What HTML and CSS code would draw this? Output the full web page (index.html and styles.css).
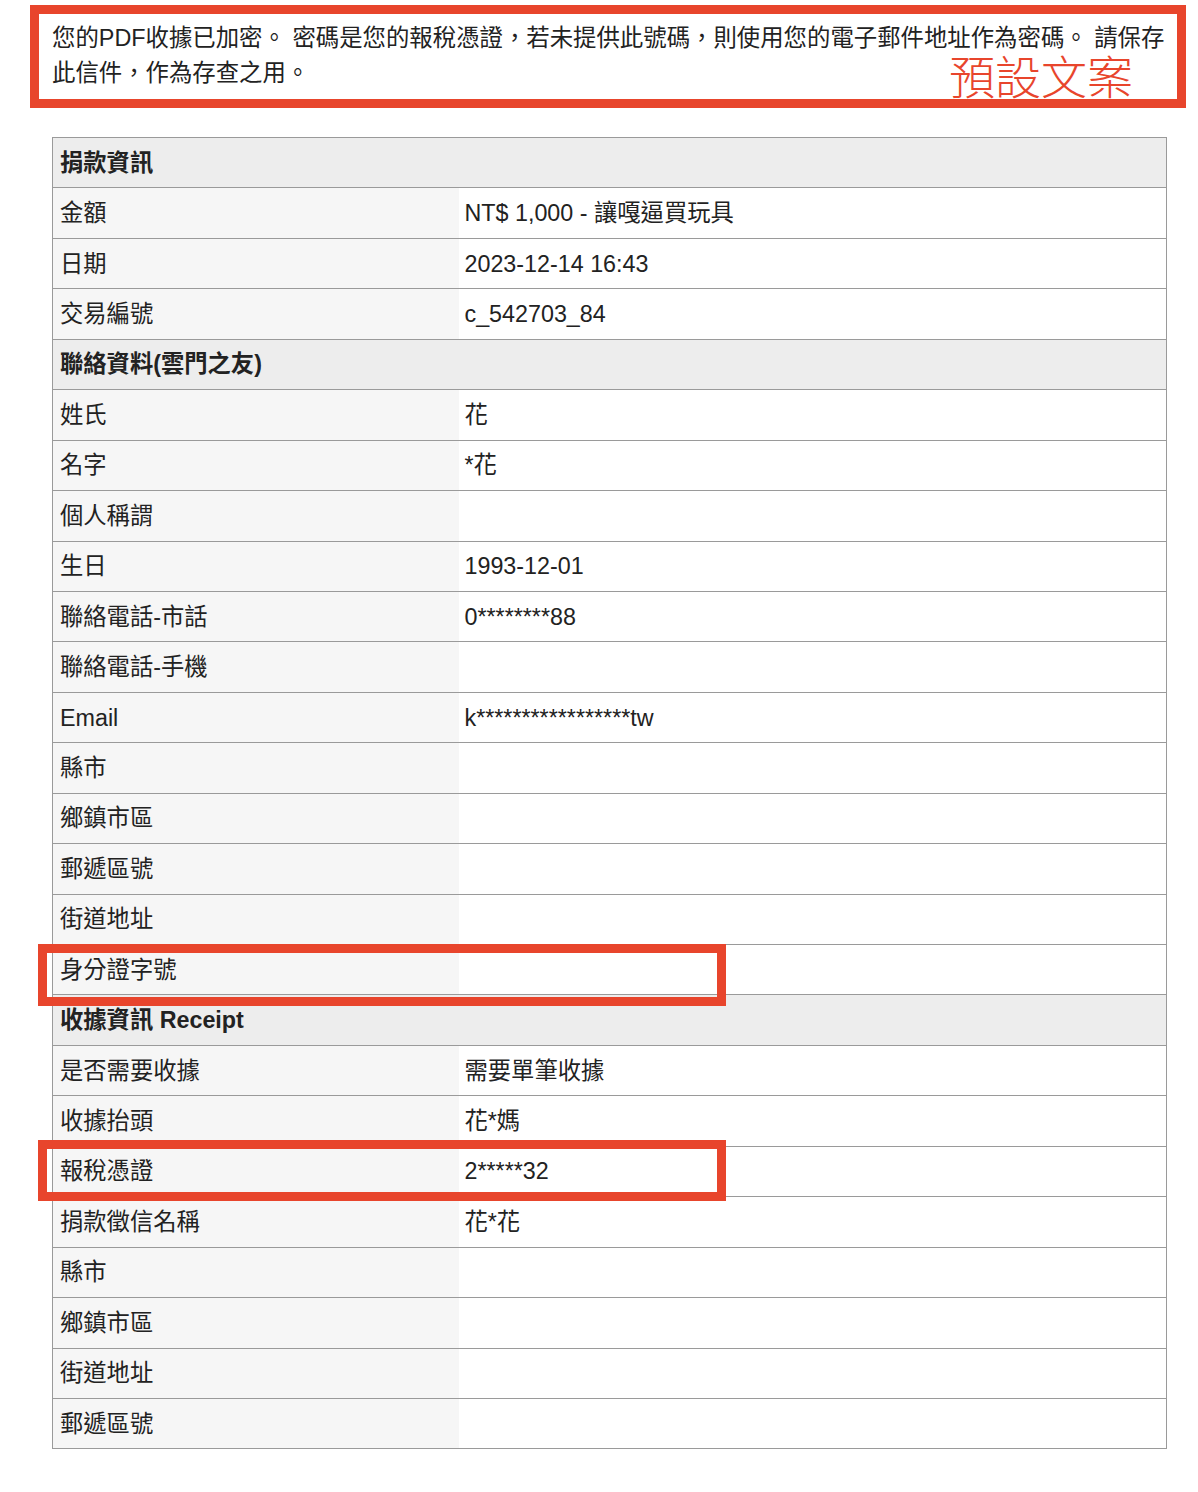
FILE: index.html
```html
<!DOCTYPE html>
<html lang="zh-Hant">
<head>
<meta charset="utf-8">
<title>收據</title>
<link rel="stylesheet" href="styles.css">
</head>
<body>
<div class="notice">
  <p class="notice-text">您的PDF收據已加密。 密碼是您的報稅憑證，若未提供此號碼，則使用您的電子郵件地址作為密碼。 請保存此信件，作為存查之用。</p>
  <span class="annot">預設文案</span>
</div>
<div class="table-wrap">
  <table class="info">
    <colgroup><col class="c-label"><col class="c-value"></colgroup>
    <tr class="sec"><td colspan="2">捐款資訊</td></tr>
    <tr><td>金額</td><td>NT$ 1,000 - 讓嘎逼買玩具</td></tr>
    <tr><td>日期</td><td>2023-12-14 16:43</td></tr>
    <tr><td>交易編號</td><td>c_542703_84</td></tr>
    <tr class="sec"><td colspan="2">聯絡資料(雲門之友)</td></tr>
    <tr><td>姓氏</td><td>花</td></tr>
    <tr><td>名字</td><td>*花</td></tr>
    <tr><td>個人稱謂</td><td></td></tr>
    <tr><td>生日</td><td>1993-12-01</td></tr>
    <tr><td>聯絡電話-市話</td><td>0********88</td></tr>
    <tr><td>聯絡電話-手機</td><td></td></tr>
    <tr><td>Email</td><td>k*****************tw</td></tr>
    <tr><td>縣市</td><td></td></tr>
    <tr><td>鄉鎮市區</td><td></td></tr>
    <tr><td>郵遞區號</td><td></td></tr>
    <tr><td>街道地址</td><td></td></tr>
    <tr><td>身分證字號</td><td></td></tr>
    <tr class="sec"><td colspan="2">收據資訊 Receipt</td></tr>
    <tr><td>是否需要收據</td><td>需要單筆收據</td></tr>
    <tr><td>收據抬頭</td><td>花*媽</td></tr>
    <tr><td>報稅憑證</td><td>2*****32</td></tr>
    <tr><td>捐款徵信名稱</td><td>花*花</td></tr>
    <tr><td>縣市</td><td></td></tr>
    <tr><td>鄉鎮市區</td><td></td></tr>
    <tr><td>街道地址</td><td></td></tr>
    <tr><td>郵遞區號</td><td></td></tr>
  </table>
  <div class="hl hl-id"></div>
  <div class="hl hl-tax"></div>
</div>
</body>
</html>
```
FILE: styles.css
```css
html, body {
  margin: 0;
  padding: 0;
  background: #ffffff;
}
body {
  font-family: "Liberation Sans", "Noto Sans CJK TC", sans-serif;
  color: #222222;
}
.notice {
  position: relative;
  box-sizing: border-box;
  width: 1156px;
  height: 103px;
  margin: 5px 0 0 30px;
  border: 9px solid #e8452c;
  background: #ffffff;
}
.notice-text {
  margin: 0;
  padding: 7px 8px 0 13px;
  font-size: 23.4px;
  line-height: 35px;
}
.annot {
  position: absolute;
  left: 910px;
  top: 37px;
  font-family: "Noto Sans CJK TC", sans-serif;
  font-weight: 300;
  font-size: 46px;
  line-height: 46px;
  color: #e8452c;
  white-space: nowrap;
}
.table-wrap {
  position: relative;
  width: 1115px;
  margin: 29px 0 0 52px;
}
.info {
  width: 1115px;
  border-collapse: collapse;
  table-layout: fixed;
  border: 1px solid #9a9a9a;
  font-size: 23.3px;
}
.c-label { width: 406px; }
.info tr { height: 50.45px; }
.info td {
  padding: 0 6px;
  border-top: 1px solid #9a9a9a;
  border-bottom: 1px solid #9a9a9a;
  vertical-align: middle;
  line-height: 28px;
  white-space: nowrap;
}
.info td:first-child {
  background: #f6f6f6;
  padding-left: 7px;
}
.info tr.sec td {
  background: #ededed;
  font-weight: bold;
}
.hl {
  position: absolute;
  left: -14px;
  width: 688px;
  box-sizing: border-box;
  border: 9px solid #e8452c;
}
.hl-id {
  top: 807px;
  height: 62px;
}
.hl-tax {
  top: 1003px;
  height: 61px;
}
```
